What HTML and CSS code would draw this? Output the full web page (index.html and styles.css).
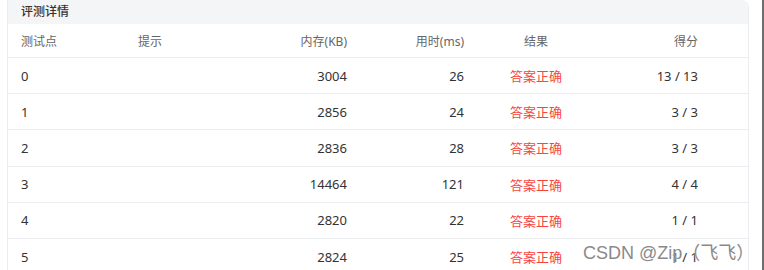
FILE: index.html
```html
<!DOCTYPE html>
<html lang="zh">
<head>
<meta charset="utf-8">
<link rel="stylesheet" href="styles.css">
</head>
<body>
<div class="card">
  <div class="card-title">评测详情</div>
  <div class="row head">
    <div class="c">测试点</div>
    <div class="c">提示</div>
    <div class="c r">内存(KB)</div>
    <div class="c r">用时(ms)</div>
    <div class="c m">结果</div>
    <div class="c r">得分</div>
    <div class="c"></div>
  </div>
  <div class="row">
    <div class="c">0</div><div class="c"></div><div class="c r">3004</div><div class="c r">26</div><div class="c m ok">答案正确</div><div class="c r">13 / 13</div><div class="c"></div>
  </div>
  <div class="row">
    <div class="c">1</div><div class="c"></div><div class="c r">2856</div><div class="c r">24</div><div class="c m ok">答案正确</div><div class="c r">3 / 3</div><div class="c"></div>
  </div>
  <div class="row">
    <div class="c">2</div><div class="c"></div><div class="c r">2836</div><div class="c r">28</div><div class="c m ok">答案正确</div><div class="c r">3 / 3</div><div class="c"></div>
  </div>
  <div class="row">
    <div class="c">3</div><div class="c"></div><div class="c r">14464</div><div class="c r">121</div><div class="c m ok">答案正确</div><div class="c r">4 / 4</div><div class="c"></div>
  </div>
  <div class="row">
    <div class="c">4</div><div class="c"></div><div class="c r">2820</div><div class="c r">22</div><div class="c m ok">答案正确</div><div class="c r">1 / 1</div><div class="c"></div>
  </div>
  <div class="row">
    <div class="c">5</div><div class="c"></div><div class="c r">2824</div><div class="c r">25</div><div class="c m ok">答案正确</div><div class="c r">1 / 1</div><div class="c"></div>
  </div>
</div>
<div class="watermark">CSDN @Zip（飞飞）</div>
<div class="scrollbar"></div>
</body>
</html>
```
FILE: styles.css
```css
html, body {
  margin: 0;
  padding: 0;
  background: #ffffff;
  overflow: hidden;
}
body {
  padding-left: 7px;
  width: 757px;
  height: 270px;
  font-family: "Noto Sans", "Noto Sans CJK SC", sans-serif;
  color: #333;
}
.card {
  width: 740px;
  border: 1px solid #ebedf0;
  border-top: none;
  border-radius: 0 8px 0 0;
  overflow: hidden;
}
.card-title {
  height: 24px;
  line-height: 24px;
  background: #f4f5f7;
  padding-left: 13px;
  font-size: 12px;
  font-weight: 500;
  color: #333;
}
.row {
  display: grid;
  grid-template-columns: 117px 117px 119px 117px 117px 117px 1fr;
  height: 35.2px;
  align-items: center;
  border-top: 1px solid #ebedf0;
  font-size: 13px;
  color: #333;
}
.row.head {
  height: 33px;
  border-top: none;
  border-bottom: 1px solid #ebedf0;
  font-size: 12px;
  color: #666;
}
.row.head + .row {
  border-top: none;
}
.c {
  padding: 0 14px 0 13px;
  white-space: nowrap;
}
.c.r { text-align: right; }
.c.m { text-align: center; }
.ok { color: #f7453d; }
.watermark {
  position: absolute;
  left: 583px;
  top: 238px;
  font-family: "Liberation Sans", "Noto Sans CJK SC", sans-serif;
  font-size: 18px;
  color: #8a8a8a;
  text-shadow: 0 0 1px #fff;
  white-space: nowrap;
}
.scrollbar {
  position: fixed;
  right: 0;
  top: 0;
  width: 2px;
  height: 270px;
  background: #6e6e6e;
}
```
